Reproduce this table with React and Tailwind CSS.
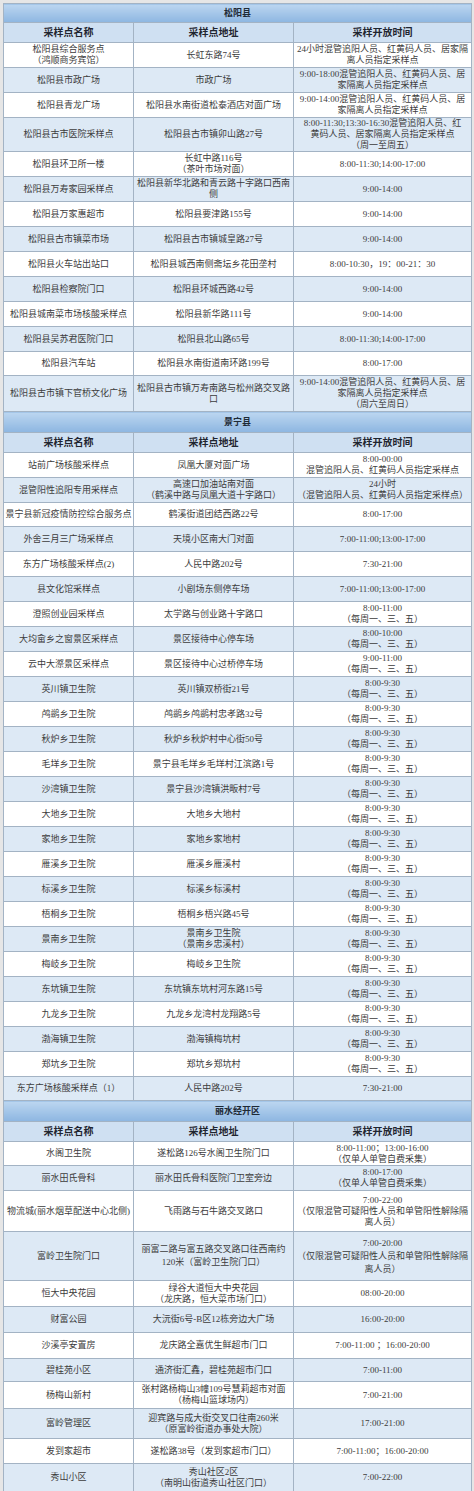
import React from 'react';

const W = '8:00-9:30\n（每周一、三、五）';

// 每个区的采样点，h 为行高
const sections = [
  {
    title: '松阳县',
    head: 'h-[19px]',
    rows: [
      ['松阳县综合服务点\n（鸿顺商务宾馆）', '长虹东路74号', '24小时混管追阳人员、红黄码人员、居家隔\n离人员指定采样点'],
      ['松阳县市政广场', '市政广场', '9:00-18:00混管追阳人员、红黄码人员、居\n家隔离人员指定采样点'],
      ['松阳县青龙广场', '松阳县水南街道松泰酒店对面广场', '9:00-14:00混管追阳人员、红黄码人员、居\n家隔离人员指定采样点'],
      ['松阳县古市医院采样点', '松阳县古市镇卯山路27号', '8:00-11:30;13:30-16:30混管追阳人员、红\n黄码人员、居家隔离人员指定采样点\n（周一至周五）', 'h-[32px]'],
      ['松阳县环卫所一楼', '长虹中路116号\n（茶叶市场对面）', '8:00-11:30;14:00-17:00'],
      ['松阳县万寿家园采样点', '松阳县新华北路和青云路十字路口西南\n侧', '9:00-14:00'],
      ['松阳县万家惠超市', '松阳县要津路155号', '9:00-14:00'],
      ['松阳县古市镇菜市场', '松阳县古市镇城皇路27号', '9:00-14:00'],
      ['松阳县火车站出站口', '松阳县城西南侧斋坛乡花田垄村', '8:00-10:30，19：00-21：30'],
      ['松阳县检察院门口', '松阳县环城西路42号', '9:00-14:00'],
      ['松阳县城南菜市场核酸采样点', '松阳县新华路111号', '9:00-14:00'],
      ['松阳县吴苏君医院门口', '松阳县北山路65号', '8:00-11:30;14:00-17:00'],
      ['松阳县汽车站', '松阳县水南街道南环路199号', '8:00-17:00', 'h-[24px]'],
      ['松阳县古市镇下官桥文化广场', '松阳县古市镇万寿南路与松州路交叉路\n口', '9:00-14:00混管追阳人员、红黄码人员、居\n家隔离人员指定采样点\n（周六至周日）', 'h-[36px]'],
    ],
  },
  {
    title: '景宁县',
    head: 'h-[21px]',
    rows: [
      ['站前广场核酸采样点', '凤凰大厦对面广场', '8:00-00:00\n混管追阳人员、红黄码人员指定采样点'],
      ['混管阳性追阳专用采样点', '高速口加油站南对面\n（鹤溪中路与凤凰大道十字路口）', '24小时\n（混管追阳人员、红黄码人员指定采样点）'],
      ['景宁县新冠疫情防控综合服务点', '鹤溪街道团结西路22号', '8:00-17:00', 'h-[24px]'],
      ['外舍三月三广场采样点', '天境小区南大门对面', '7:00-11:00;13:00-17:00'],
      ['东方广场核酸采样点(2)', '人民中路202号', '7:30-21:00'],
      ['县文化馆采样点', '小剧场东侧停车场', '7:00-11:00;13:00-17:00'],
      ['澄照创业园采样点', '太学路与创业路十字路口', '8:00-11:00\n（每周一、三、五）'],
      ['大均畲乡之窗景区采样点', '景区接待中心停车场', '8:00-10:00\n（每周一、三、五）'],
      ['云中大漈景区采样点', '景区接待中心过桥停车场', '9:00-11:00\n（每周一、三、五）'],
      ['英川镇卫生院', '英川镇双桥街21号', W],
      ['鸬鹚乡卫生院', '鸬鹚乡鸬鹚村忠孝路32号', W],
      ['秋炉乡卫生院', '秋炉乡秋炉村中心街50号', W],
      ['毛垟乡卫生院', '景宁县毛垟乡毛垟村江滨路1号', W],
      ['沙湾镇卫生院', '景宁县沙湾镇洪畈村7号', W],
      ['大地乡卫生院', '大地乡大地村', W],
      ['家地乡卫生院', '家地乡家地村', W],
      ['雁溪乡卫生院', '雁溪乡雁溪村', W],
      ['标溪乡卫生院', '标溪乡标溪村', W],
      ['梧桐乡卫生院', '梧桐乡梧兴路45号', W],
      ['景南乡卫生院', '景南乡卫生院\n（景南乡忠溪村）', W],
      ['梅岐乡卫生院', '梅岐乡卫生院', W],
      ['东坑镇卫生院', '东坑镇东坑村河东路15号', W],
      ['九龙乡卫生院', '九龙乡龙湾村龙翔路5号', W],
      ['渤海镇卫生院', '渤海镇梅坑村', W],
      ['郑坑乡卫生院', '郑坑乡郑坑村', W],
      ['东方广场核酸采样点（1）', '人民中路202号', '7:30-21:00', 'h-[24px]'],
    ],
  },
  {
    title: '丽水经开区',
    head: 'h-[21px]',
    rows: [
      ['水阁卫生院', '遂松路126号水阁卫生院门口', '8:00-11:00；13:00-16:00\n（仅单人单管自费采集）', 'h-[24px]'],
      ['丽水田氏骨科', '丽水田氏骨科医院门卫室旁边', '8:00-17:00\n（仅单人单管自费采集）'],
      ['物流城(丽水烟草配送中心北侧)', '飞雨路与石牛路交叉路口', '7:00-22:00\n（仅限混管可疑阳性人员和单管阳性解除隔\n离人员）', 'h-[41px]'],
      ['富岭卫生院门口', '丽富二路与富五路交叉路口往西南约\n120米（富岭卫生院门口）', '7:00-20:00\n（仅限混管可疑阳性人员和单管阳性解除隔\n离人员）', 'h-[49px]', 'leading-[13px]'],
      ['恒大中央花园', '绿谷大道恒大中央花园\n（龙庆路，恒大菜市场门口）', '08:00-20:00', 'h-[26px]'],
      ['财富公园', '大沅街6号-B区12栋旁边大广场', '16:00-20:00', 'h-[26px]'],
      ['沙溪亭安置房', '龙庆路全嘉优生鲜超市门口', '7:00-11:00 ；16:00-20:00', 'h-[26px]'],
      ['碧桂苑小区', '通济街汇鑫，碧桂苑超市门口', '7:00-11:00', 'h-[23px]'],
      ['杨梅山新村', '张村路杨梅山3幢109号慧莉超市对面\n（杨梅山篮球场内）', '7:00-21:00', 'h-[27px]'],
      ['富岭管理区', '迎宾路与成大街交叉口往南260米\n（原富岭街道办事处大院）', '17:00-21:00', 'h-[30px]'],
      ['发到家超市', '遂松路38号（发到家超市门口）', '7:00-11:00；16:00-20:00'],
      ['秀山小区', '秀山社区2区\n（南明山街道秀山社区门口）', '7:00-22:00', 'h-[28px]'],
    ],
  },
];

const cell = 'border border-[#a3b3c4] text-center align-middle px-[1px] py-0 whitespace-pre-line';

const Section = ({ title, head, rows }) => (
  <>
    <tr className={head}>
      <td colSpan={3} className={`${cell} bg-linear-to-b from-[#bcd6f0] to-[#8db6e1] font-bold text-[#1e2a36]`}>
        {title}
      </td>
    </tr>
    <tr className="h-[20px] bg-[#cfe0f2] font-bold text-[10px] text-[#1f2530]">
      <td className={cell}>采样点名称</td>
      <td className={cell}>采样点地址</td>
      <td className={cell}>采样开放时间</td>
    </tr>
    {rows.map(([name, addr, time, h, lead], i) => (
      <tr
        key={name + i}
        className={`${h || 'h-[25px]'} ${lead || 'leading-[11px]'} ${i % 2 ? 'bg-[#dde9f5]' : 'bg-white'}`}
      >
        <td className={`${cell} whitespace-nowrap`}>{name}</td>
        <td className={cell}>{addr}</td>
        <td className={cell}>{time}</td>
      </tr>
    ))}
  </>
);

export default function App() {
  return (
    <div className="min-h-[1491px] bg-[#e6e6e6] px-[3px] pt-[3px] pb-[1px] font-['Liberation_Serif','Noto_Sans_CJK_SC',serif]">
      <table className="w-[468px] table-fixed border-collapse text-[9px] leading-[11px] text-[#3c3c3c]">
        <colgroup>
          <col className="w-[130px]" />
          <col className="w-[160px]" />
          <col className="w-[178px]" />
        </colgroup>
        <tbody>
          {sections.map((s) => (
            <Section key={s.title} {...s} />
          ))}
        </tbody>
      </table>
    </div>
  );
}
